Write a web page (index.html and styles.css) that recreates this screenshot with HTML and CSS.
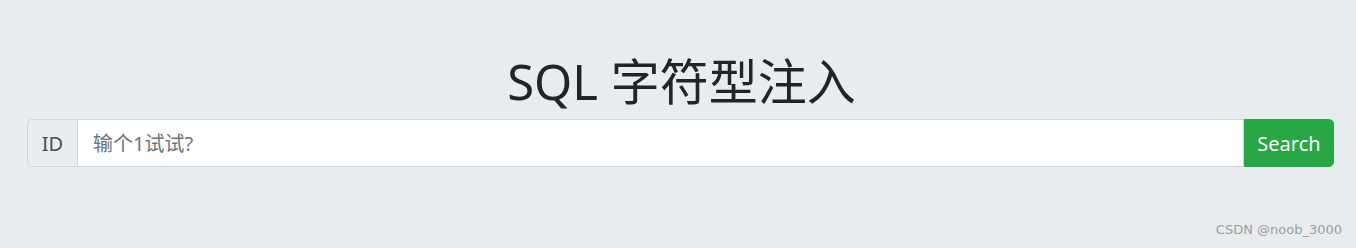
FILE: index.html
```html
<!DOCTYPE html>
<html lang="zh">
<head>
<meta charset="utf-8">
<title>SQL 字符型注入</title>
<link rel="stylesheet" href="styles.css">
</head>
<body>
<main class="jumbotron">
  <h1 class="title">SQL 字符型注入</h1>
  <form class="input-group">
    <span class="addon">ID</span>
    <input class="field" type="text" placeholder="输个1试试?">
    <button class="btn" type="button">Search</button>
  </form>
</main>
<footer class="mark">CSDN @noob_3000</footer>
</body>
</html>
```

FILE: styles.css
```css
html, body {
  margin: 0;
  padding: 0;
  background: #e9ecef;
  height: 248px;
  overflow: hidden;
  font-family: "Noto Sans", "Noto Sans CJK SC", sans-serif;
}
.jumbotron {
  padding: 50px 22px 0 27px;
  display: flex;
  flex-direction: column;
  align-items: stretch;
}
.title {
  margin: 0 0 6px;
  text-align: center;
  font-weight: 400;
  font-size: 49px;
  line-height: 63px;
  color: #212529;
  padding-left: 2px;
}
.input-group {
  display: flex;
  height: 48px;
  margin: 0;
}
.addon {
  box-sizing: border-box;
  width: 51px;
  display: flex;
  align-items: center;
  justify-content: center;
  background: #e9ecef;
  border: 1px solid #ced4da;
  border-radius: 5px 0 0 5px;
  font-size: 20px;
  color: #495057;
}
.field {
  flex: 1;
  box-sizing: border-box;
  height: 48px;
  border: 1px solid #ced4da;
  border-left: none;
  padding: 0 15px;
  font-family: "Noto Sans", "Noto Sans CJK SC", sans-serif;
  font-size: 20px;
  color: #495057;
  background: #fff;
  outline: none;
}
.field::placeholder {
  color: #6c757d;
}
.btn {
  box-sizing: border-box;
  width: 90px;
  height: 48px;
  border: 1px solid #28a745;
  background: #28a745;
  color: #fff;
  font-family: "Noto Sans", sans-serif;
  font-size: 20px;
  border-radius: 0 5px 5px 0;
  padding: 0;
}
.mark {
  position: absolute;
  right: 14px;
  top: 222px;
  font-family: "DejaVu Sans", sans-serif;
  font-size: 13px;
  color: #9a9da1;
}
```
